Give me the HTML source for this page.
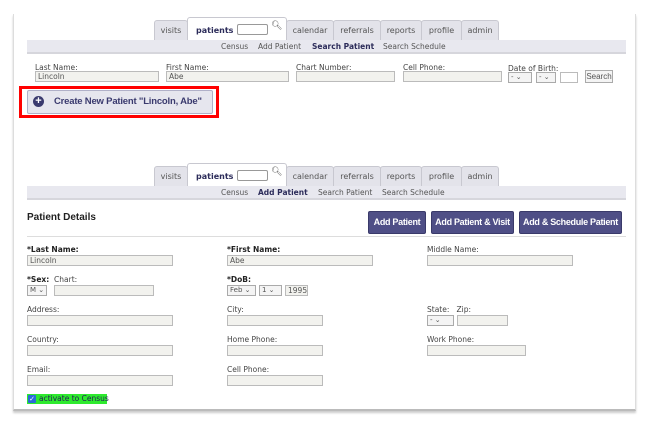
<!DOCTYPE html>
<html><head><style>
*{margin:0;padding:0;box-sizing:border-box}
body{width:650px;height:426px;background:#fff;position:relative;overflow:hidden;font-family:"DejaVu Sans","Liberation Sans",sans-serif;font-size:7.5px;color:#333;white-space:nowrap}
.a{position:absolute}
.panel{left:13px;top:14px;width:623px;height:397px;border-left:1px solid #ddd;border-right:1px solid #ddd;border-bottom:2px solid #bbb;box-shadow:0 2px 2px #ccc}
.tab{position:absolute;height:20px;background:#e3e3ea;border:1px solid #c8c8d0;border-bottom:none;border-radius:3px 3px 0 0;color:#555;font-size:8px;text-align:center;line-height:19px}
.tab.on{background:#fff;color:#2c2c5a;font-weight:bold;height:24px;text-align:left;padding-left:8px;line-height:25px}
.sub{position:absolute;left:27px;width:599px;height:14px;background:#e8e8ef;border-bottom:2px solid #d6d6dc;font-size:7.5px;color:#555;line-height:13px}
.sub span{position:absolute;top:0}
.lbl{position:absolute;font-size:7.5px;color:#444}
.in{position:absolute;height:11px;background:#f2f2ee;border:1px solid #bbb;font-size:7.5px;color:#555;line-height:9px;padding-left:2px}
.sel{position:absolute;height:11px;background:#f4f4f4;border:1px solid #aaa;font-size:7px;color:#555;line-height:9px;padding-left:2px}
.btn{position:absolute;background:#4f4f86;border:1px solid #3a3a6a;border-radius:2px;color:#fff;font-family:"Liberation Sans",sans-serif;font-weight:bold;font-size:9px;text-align:center;line-height:21px;letter-spacing:-0.3px}
b{color:#222}
</style></head><body>
<div class="a panel"></div>

<div class="tab" style="left:154px;top:20px;width:34px">visits</div>
<div class="tab on" style="left:187px;top:17px;width:100px">patients</div>
<div class="a" style="left:237px;top:24px;width:31px;height:11px;border:1px solid #999;border-radius:2px;background:#fff"></div>
<div class="a" style="left:271px;top:21px;font-size:9px;color:#555">&#x1F50D;&#xFE0E;</div>
<div class="tab" style="left:286px;top:20px;width:48px">calendar</div>
<div class="tab" style="left:333px;top:20px;width:48px">referrals</div>
<div class="tab" style="left:380px;top:20px;width:42px">reports</div>
<div class="tab" style="left:421px;top:20px;width:41px">profile</div>
<div class="tab" style="left:461px;top:20px;width:38px">admin</div>
<div class="sub" style="top:40px"><span style="left:194px">Census</span><span style="left:231px">Add Patient</span><span style="left:285px;color:#2c2c5a;font-weight:bold">Search Patient</span><span style="left:356px">Search Schedule</span></div>

<div class="lbl" style="left:35px;top:63px">Last Name:</div>
<div class="in" style="left:35px;top:71px;width:124px">Lincoln</div>
<div class="lbl" style="left:166px;top:63px">First Name:</div>
<div class="in" style="left:166px;top:71px;width:123px">Abe</div>
<div class="lbl" style="left:296px;top:63px">Chart Number:</div>
<div class="in" style="left:296px;top:71px;width:99px"></div>
<div class="lbl" style="left:403px;top:63px">Cell Phone:</div>
<div class="in" style="left:403px;top:71px;width:99px"></div>
<div class="lbl" style="left:508px;top:64px">Date of Birth:</div>
<div class="sel" style="left:508px;top:72px;width:24px">- &#8964;</div>
<div class="sel" style="left:536px;top:72px;width:20px">- &#8964;</div>
<div class="in" style="left:560px;top:72px;width:18px;background:#fff"></div>
<div class="a" style="left:585px;top:70px;width:28px;height:13px;border:1px solid #aaa;background:#f4f4f4;font-size:8px;color:#555;text-align:center;line-height:11px;font-family:'Liberation Sans',sans-serif">Search</div>

<div class="a" style="left:19px;top:86px;width:200px;height:32px;border:3px solid #f00"></div>
<div class="a" style="left:27px;top:90px;width:186px;height:24px;background:#e6e6ee;border:1px solid #b0b0c8;border-radius:2px;font-family:'Liberation Sans',sans-serif;font-weight:bold;font-size:9.5px;letter-spacing:-0.2px;color:#3a3a6e;line-height:22px;padding-left:26px">Create New Patient "Lincoln, Abe"</div>
<div class="a" style="left:33px;top:96px;width:11px;height:11px;border-radius:50%;background:#3a3a6e;color:#fff;font-size:11px;font-weight:bold;line-height:10px;text-align:center;font-family:'Liberation Sans',sans-serif">+</div>

<div class="tab" style="left:154px;top:166px;width:34px">visits</div>
<div class="tab on" style="left:187px;top:163px;width:100px">patients</div>
<div class="a" style="left:237px;top:170px;width:31px;height:11px;border:1px solid #999;border-radius:2px;background:#fff"></div>
<div class="a" style="left:271px;top:167px;font-size:9px;color:#555">&#x1F50D;&#xFE0E;</div>
<div class="tab" style="left:286px;top:166px;width:48px">calendar</div>
<div class="tab" style="left:333px;top:166px;width:48px">referrals</div>
<div class="tab" style="left:380px;top:166px;width:42px">reports</div>
<div class="tab" style="left:421px;top:166px;width:41px">profile</div>
<div class="tab" style="left:461px;top:166px;width:38px">admin</div>
<div class="sub" style="top:186px"><span style="left:194px">Census</span><span style="left:231px;color:#2c2c5a;font-weight:bold">Add Patient</span><span style="left:291px">Search Patient</span><span style="left:355px">Search Schedule</span></div>

<div class="a" style="left:27px;top:212px;font-family:'Liberation Sans',sans-serif;font-weight:bold;font-size:10px;color:#222">Patient Details</div>
<div class="btn" style="left:368px;top:211px;width:58px;height:23px">Add Patient</div>
<div class="btn" style="left:431px;top:211px;width:83px;height:23px">Add Patient &amp; Visit</div>
<div class="btn" style="left:519px;top:211px;width:103px;height:23px">Add &amp; Schedule Patient</div>
<div class="a" style="left:27px;top:236px;width:599px;height:1px;background:#ddd"></div>

<div class="lbl" style="left:27px;top:245px"><b>*Last Name:</b></div>
<div class="in" style="left:27px;top:255px;width:146px">Lincoln</div>
<div class="lbl" style="left:227px;top:245px"><b>*First Name:</b></div>
<div class="in" style="left:227px;top:255px;width:146px">Abe</div>
<div class="lbl" style="left:427px;top:245px">Middle Name:</div>
<div class="in" style="left:427px;top:255px;width:146px"></div>

<div class="lbl" style="left:27px;top:275px"><b>*Sex:</b>&nbsp; Chart:</div>
<div class="sel" style="left:27px;top:285px;width:20px">M &#8964;</div>
<div class="in" style="left:54px;top:285px;width:100px"></div>
<div class="lbl" style="left:227px;top:275px"><b>*DoB:</b></div>
<div class="sel" style="left:227px;top:285px;width:29px">Feb &#8964;</div>
<div class="sel" style="left:259px;top:285px;width:23px">1 &#8964;</div>
<div class="in" style="left:285px;top:285px;width:23px">1995</div>

<div class="lbl" style="left:27px;top:305px">Address:</div>
<div class="in" style="left:27px;top:315px;width:146px"></div>
<div class="lbl" style="left:227px;top:305px">City:</div>
<div class="in" style="left:227px;top:315px;width:96px"></div>
<div class="lbl" style="left:427px;top:305px">State: &nbsp; Zip:</div>
<div class="sel" style="left:427px;top:315px;width:27px">- &#8964;</div>
<div class="in" style="left:457px;top:315px;width:51px"></div>

<div class="lbl" style="left:27px;top:335px">Country:</div>
<div class="in" style="left:27px;top:345px;width:146px"></div>
<div class="lbl" style="left:227px;top:335px">Home Phone:</div>
<div class="in" style="left:227px;top:345px;width:96px"></div>
<div class="lbl" style="left:427px;top:335px">Work Phone:</div>
<div class="in" style="left:427px;top:345px;width:99px"></div>

<div class="lbl" style="left:27px;top:365px">Email:</div>
<div class="in" style="left:27px;top:375px;width:146px"></div>
<div class="lbl" style="left:227px;top:365px">Cell Phone:</div>
<div class="in" style="left:227px;top:375px;width:96px"></div>

<div class="a" style="left:27px;top:394px;width:80px;height:10px;background:#2eea2e;font-size:7.5px;color:#225;line-height:10px;padding-left:12px">activate to Census</div>
<div class="a" style="left:28px;top:395px;width:8px;height:8px;background:#2a6ad8;border-radius:1px;color:#fff;font-size:7px;line-height:8px;text-align:center">✓</div>
</body></html>
